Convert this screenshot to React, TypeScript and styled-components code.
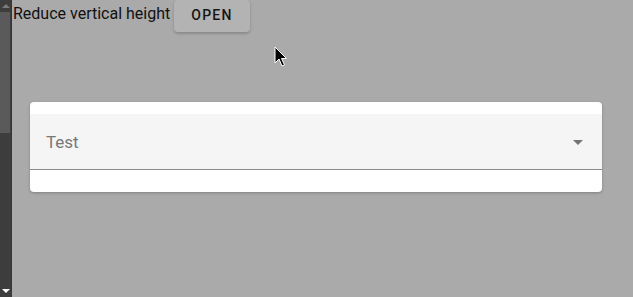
import React from 'react'
import styled, { createGlobalStyle } from 'styled-components';

const GlobalStyle = createGlobalStyle`
  html, body {
    margin: 0;
    padding: 0;
    height: 100%;
    overflow: hidden;
  }
  body {
    background: #aaaaaa;
    font-family: Roboto, "Liberation Sans", sans-serif;
  }
`;

const App: React.FC = () => {

    return (

        <Page>

            <GlobalStyle />

            <ScrollTrack>

                <ArrowUp />

                <Thumb />

                <Spacer />

                <ArrowDown />

            </ScrollTrack>

            <Main>

                <Header>

                    <Label>Reduce vertical height</Label>

                    <OpenButton>Open</OpenButton>

                </Header>

                <Card>

                    <FilledSelect>

                        <SelectValue>Test</SelectValue>

                        <Caret viewBox="0 0 24 24">
                            <path d="M7 10l5 5 5-5z" />
                        </Caret>

                    </FilledSelect>

                </Card>

                <Cursor viewBox="0 0 14 22">
                    <path d="M1 1 L1 17 L5 13 L8 20 L10.5 19 L7.5 12.5 L12.5 12.5 Z" fill="#000" stroke="#fff" strokeWidth="1" />
                </Cursor>

            </Main>

        </Page>
    );

};

export default App;

const Page = styled.div`
  display: flex;
  width: 100vw;
  height: 100vh;
  background: #aaaaaa;
`;

const ScrollTrack = styled.div`
  display: flex;
  flex-direction: column;
  width: 12px;
  flex-shrink: 0;
  height: 100%;
  background: #3d3d3d;
  border-right: 1px solid #363636;
  box-sizing: border-box;
`;

const ArrowUp = styled.div`
  height: 12px;
  display: flex;
  align-items: center;
  justify-content: center;
  &::after {
    content: '';
    border-left: 4px solid transparent;
    border-right: 4px solid transparent;
    border-bottom: 4px solid #7a7a7a;
  }
`;

const ArrowDown = styled.div`
  height: 12px;
  display: flex;
  align-items: center;
  justify-content: center;
  &::after {
    content: '';
    border-left: 4px solid transparent;
    border-right: 4px solid transparent;
    border-top: 4px solid #ffffff;
  }
`;

const Thumb = styled.div`
  width: 10px;
  height: 121px;
  background: #5a5a5a;
`;

const Spacer = styled.div`
  flex: 1;
`;

const Main = styled.div`
  position: relative;
  flex: 1;
  display: flex;
  flex-direction: column;
`;

const Header = styled.div`
  display: flex;
  align-items: flex-start;
  gap: 4px;
  padding-left: 1px;
`;

const Label = styled.span`
  font-size: 16px;
  line-height: 28px;
  color: #111;
`;

const OpenButton = styled.button`
  height: 32px;
  min-width: 64px;
  padding: 0 17px 2px;
  border: none;
  border-radius: 4px;
  background: #b3b3b3;
  color: #151515;
  font-family: Roboto, "Liberation Sans", sans-serif;
  font-size: 14px;
  font-weight: 500;
  letter-spacing: 0.09em;
  text-transform: uppercase;
  box-shadow: 0 2px 2px rgba(0, 0, 0, 0.12), 0 1px 4px rgba(0, 0, 0, 0.1);
`;

const Card = styled.div`
  margin: 70px 31px 0 18px;
  padding: 12px 0 22px;
  background: #ffffff;
  border-radius: 4px;
  box-shadow: 0 1px 3px rgba(0, 0, 0, 0.25);
`;

const FilledSelect = styled.div`
  display: flex;
  align-items: center;
  justify-content: space-between;
  height: 55px;
  padding: 0 12px 0 16px;
  background: #f5f5f5;
  border-bottom: 1px solid #8c8c8c;
`;

const SelectValue = styled.span`
  font-size: 17px;
  color: #777777;
`;

const Caret = styled.svg`
  width: 24px;
  height: 24px;
  fill: #757575;
`;

const Cursor = styled.svg`
  position: absolute;
  left: 262px;
  top: 46px;
  width: 14px;
  height: 22px;
`;
